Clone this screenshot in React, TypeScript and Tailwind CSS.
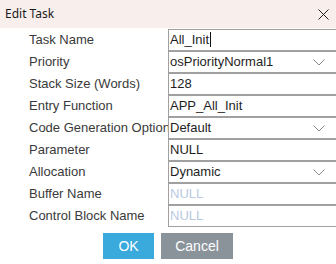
import React from 'react';

type Field = {
  label: string;
  value: string;
  kind?: 'text' | 'select' | 'placeholder';
  caret?: boolean;
};

const fields: Field[] = [
  { label: 'Task Name', value: 'All_Init', caret: true },
  { label: 'Priority', value: 'osPriorityNormal1', kind: 'select' },
  { label: 'Stack Size (Words)', value: '128' },
  { label: 'Entry Function', value: 'APP_All_Init' },
  { label: 'Code Generation Option', value: 'Default', kind: 'select' },
  { label: 'Parameter', value: 'NULL' },
  { label: 'Allocation', value: 'Dynamic', kind: 'select' },
  { label: 'Buffer Name', value: 'NULL', kind: 'placeholder' },
  { label: 'Control Block Name', value: 'NULL', kind: 'placeholder' },
];

function Chevron() {
  return (
    <svg width="12" height="7" viewBox="0 0 12 7" className="shrink-0">
      <path d="M0.5 0.5 L6 6 L11.5 0.5" fill="none" stroke="#8a8a8a" strokeWidth="1" />
    </svg>
  );
}

export default function App() {
  return (
    <div className="w-[336px] h-[264px] overflow-hidden bg-white font-['Liberation_Sans',Arial,sans-serif]">
      {/* title bar */}
      <div className="h-[28px] bg-[#f8efed] flex items-center justify-between pl-[5px] pr-[6px]">
        <span className="text-[12px] text-[#1a1a1a] font-['Noto_Sans',sans-serif]">Edit Task</span>
        <svg width="11" height="11" viewBox="0 0 11 11" className="mr-[1px]">
          <path d="M0.5 0.5 L10.5 10.5 M10.5 0.5 L0.5 10.5" stroke="#222" strokeWidth="1" />
        </svg>
      </div>

      {/* form rows */}
      <div className="pt-[1px]">
        {fields.map((f) => (
          <div key={f.label} className="flex h-[22px]">
            <div className="w-[168px] shrink-0 pl-[29px] overflow-hidden whitespace-nowrap flex items-center text-[13px] text-[#3a3a3a]">
              {f.label}
            </div>
            <div className="w-[176px] shrink-0 border border-[#a0a0a0] flex items-center justify-between pl-[1px] pr-[18px] text-[13px]">
              <span
                className={
                  f.kind === 'placeholder' ? 'text-[#b9c9e2]' : 'text-[#1e1e1e]'
                }
              >
                {f.value}
                {f.caret && <span className="inline-block w-[1px] h-[15px] bg-[#111] align-[-3px] ml-[1px]" />}
              </span>
              {f.kind === 'select' && <Chevron />}
            </div>
          </div>
        ))}
      </div>

      {/* buttons */}
      <div className="flex justify-center gap-[7px] mt-[6px]">
        <button className="w-[51px] h-[26px] bg-[#3aa9dc] text-white text-[14px]">OK</button>
        <button className="w-[72px] h-[26px] bg-[#8b939a] text-white text-[14px]">Cancel</button>
      </div>
    </div>
  );
}
